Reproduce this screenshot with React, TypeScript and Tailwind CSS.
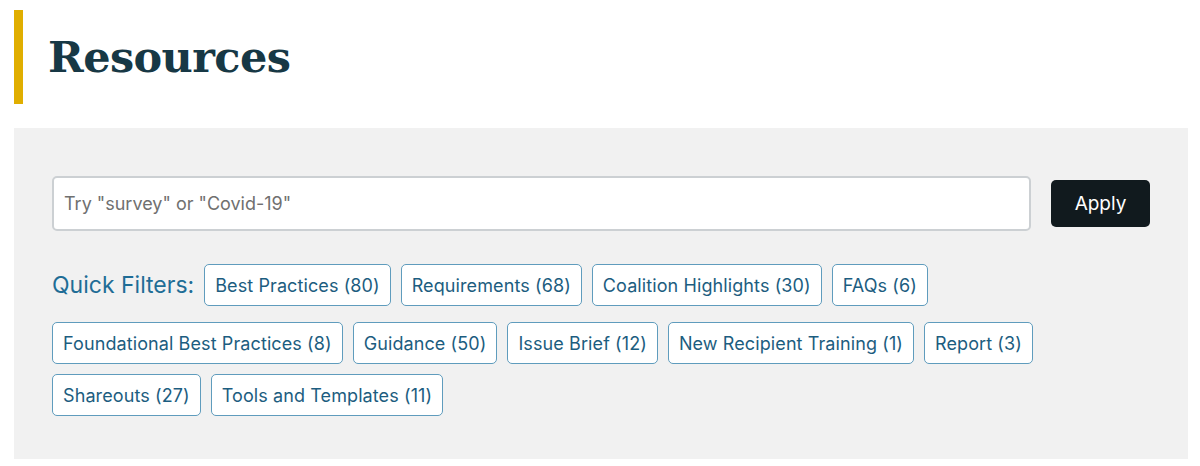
import React from "react";

const filters = [
  "Best Practices (80)",
  "Requirements (68)",
  "Coalition Highlights (30)",
  "FAQs (6)",
  "Foundational Best Practices (8)",
  "Guidance (50)",
  "Issue Brief (12)",
  "New Recipient Training (1)",
  "Report (3)",
  "Shareouts (27)",
  "Tools and Templates (11)",
];

export default function App() {
  return (
    <div className="min-h-[466px] bg-white px-[14px] pt-[10px] font-['Inter',sans-serif]">
      <header className="flex h-[94px] items-center border-l-[9px] border-[#e0ae00] pl-[25px]">
        <h1 className="m-0 font-['DejaVu_Serif',serif] text-[43px] font-bold leading-none tracking-[-0.6px] text-[#173845]">
          Resources
        </h1>
      </header>
      <section className="mt-[24px] w-[1174px] bg-[#f1f1f1] px-[38px] pb-[43px] pt-[48px]">
        <div className="flex items-center gap-[20px]">
          <input
            type="text"
            placeholder={'Try "survey" or "Covid-19"'}
            className="h-[55px] flex-1 rounded-[5px] border-2 border-[#ccd0d3] bg-white px-[10px] text-[18px] text-[#333] placeholder:text-[#707070] outline-none"
          />
          <button className="h-[47px] w-[99px] rounded-[5px] bg-[#111a1e] pt-[2px] text-[19px] text-white">
            Apply
          </button>
        </div>
        <div className="mt-[27px] flex flex-wrap items-center gap-[10px]">
          <span className="flex h-[54px] items-center text-[23px] text-[#1f6d96]">Quick Filters:</span>
          {filters.map((f) => (
            <button
              key={f}
              className="h-[42px] rounded-[5px] border border-[#5f9cbd] bg-white px-[10px] text-[18px] tracking-[0.1px] text-[#1c5d80]"
            >
              {f}
            </button>
          ))}
        </div>
      </section>
    </div>
  );
}
